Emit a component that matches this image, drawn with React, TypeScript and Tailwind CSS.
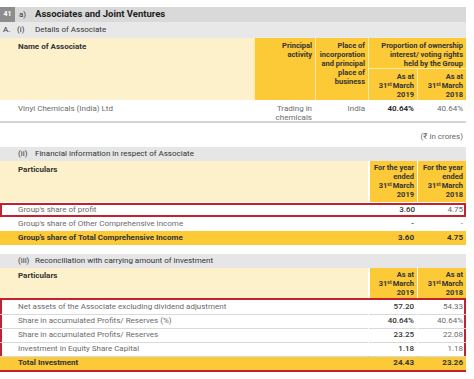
import React from "react";

const cream = "bg-[#fdf1cc]";
const yellow = "bg-[#fcc937]";

function Sup({ children }: { children: React.ReactNode }) {
  return <span className="inline-block text-[5px] leading-[5px] align-top mt-[1px] mr-[1px]">{children}</span>;
}

function SectionBar({ num, label }: { num: string; label: string }) {
  return (
    <div className="h-[14px] bg-[#e6e6e6] flex items-center text-[8px] text-[#333]">
      <span className="w-[35px] pl-[18px] shrink-0">{num}</span>
      <span>{label}</span>
    </div>
  );
}

function DataRow({
  label,
  a,
  b,
  total,
  divider = true,
}: {
  label: string;
  a: string;
  b: string;
  total?: boolean;
  divider?: boolean;
}) {
  const line = divider && !total ? "border-b border-[#d9d9d9]" : "";
  return (
    <div
      className={`grid grid-cols-[368px_1fr_1fr] h-[14px] text-[8px] leading-[14px] ${
        total ? `${yellow} font-bold text-[#333]` : "text-[#6b6b6b]"
      }`}
    >
      <div className={`pl-[18px] ${line}`}>{label}</div>
      <div className={`text-right pr-[3px] ml-px ${total ? "" : "font-medium text-[#333]"} ${line}`}>{a}</div>
      <div className={`text-right pr-[3px] ml-px ${line}`}>{b}</div>
    </div>
  );
}

export default function App() {
  return (
    <div className="w-[474px] h-[379px] bg-white pt-[7px] font-['Roboto',sans-serif] overflow-hidden">
      <div className="w-[466px]">
        {/* Title */}
        <div className="h-[15px] bg-[#d9d9d9] flex items-center">
          <div className="w-[15px] h-full bg-[#8d8d8d] text-white text-[7px] font-bold flex items-center justify-center">
            41
          </div>
          <span className="w-[20px] pl-[4px] text-[8px] text-[#333]">a)</span>
          <span className="text-[9.5px] font-bold text-[#222]">Associates and Joint Ventures</span>
        </div>
        <div className="h-[16px] bg-[#e8e8e8] flex items-center text-[8px] text-[#333]">
          <span className="w-[17px] pl-[3px]">A.</span>
          <span className="w-[18px]">(i)</span>
          <span>Details of Associate</span>
        </div>

        {/* Section i header */}
        <div className="grid grid-cols-[254px_61px_53px_49px_49px] grid-rows-[30px_32px] text-[7.5px] leading-[9px] font-bold text-[#333]">
          <div className={`row-span-2 ${cream} pl-[18px] pt-[4px] text-[8px]`}>Name of Associate</div>
          <div className={`row-span-2 ${yellow} text-right pr-[3px] pt-[3px] border-l border-[#fde9a8]`}>
            Principal
            <br />
            activity
          </div>
          <div className={`row-span-2 ${yellow} text-right pr-[3px] pt-[3px] border-l border-[#fde9a8]`}>
            Place of
            <br />
            incorporation
            <br />
            and principal
            <br />
            place of
            <br />
            business
          </div>
          <div className={`col-span-2 ${yellow} text-right pr-[3px] pt-[3px] border-l border-[#fde9a8]`}>
            Proportion of ownership
            <br />
            interest/ voting rights
            <br />
            held by the Group
          </div>
          <div className={`${yellow} text-right pr-[3px] pt-[3px] border-l border-t border-[#fde9a8]`}>
            As at
            <br />
            31<Sup>st</Sup>March
            <br />
            2019
          </div>
          <div className={`${yellow} text-right pr-[3px] pt-[3px] border-l border-t border-[#fde9a8]`}>
            As at
            <br />
            31<Sup>st</Sup>March
            <br />
            2018
          </div>
        </div>
        <div className="grid grid-cols-[254px_61px_53px_49px_49px] h-[23px] text-[8px] leading-[9px] text-[#6b6b6b] border-b-2 border-[#d4d4d4]">
          <div className="pl-[18px] pt-[4px]">Vinyl Chemicals (India) Ltd</div>
          <div className="text-right pr-[3px] pt-[4px]">
            Trading in
            <br />
            chemicals
          </div>
          <div className="text-right pr-[3px] pt-[4px]">India</div>
          <div className="text-right pr-[3px] pt-[4px] font-bold text-[#333]">40.64%</div>
          <div className="text-right pr-[3px] pt-[4px]">40.64%</div>
        </div>

        <div className="h-[24px] flex items-center justify-end pr-[3px] pt-[4px] text-[8px] text-[#666]">(₹ in crores)</div>

        {/* Section ii */}
        <SectionBar num="(ii)" label="Financial information in respect of Associate" />
        <div className="grid grid-cols-[368px_1fr_1fr] h-[41px] text-[7.5px] leading-[9px] font-bold text-[#333]">
          <div className={`${cream} pl-[18px] pt-[4px] text-[8px]`}>Particulars</div>
          <div className={`${yellow} ml-[2px] text-right pr-[3px] pt-[2px]`}>
            For the year
            <br />
            ended
            <br />
            31<Sup>st</Sup>March
            <br />
            2019
          </div>
          <div className={`${yellow} ml-px text-right pr-[3px] pt-[2px]`}>
            For the year
            <br />
            ended
            <br />
            31<Sup>st</Sup>March
            <br />
            2018
          </div>
        </div>
        <div className="border-2 border-[#c4212f] mt-px">
          <div className="grid grid-cols-[366px_1fr_1fr] h-[10px] text-[8px] leading-[10px] text-[#6b6b6b]">
            <div className="pl-[16px]">Group's share of profit</div>
            <div className="text-right pr-[1px] font-medium text-[#333]">3.60</div>
            <div className="text-right pr-[1px]">4.75</div>
          </div>
        </div>
        <DataRow label="Group's share of Other Comprehensive Income" a="-" b="-" divider={false} />
        <DataRow label="Group's share of Total Comprehensive Income" a="3.60" b="4.75" total />

        <div className="h-[9px]" />

        {/* Section iii */}
        <SectionBar num="(iii)" label="Reconciliation with carrying amount of investment" />
        <div className="grid grid-cols-[368px_1fr_1fr] h-[30px] text-[7.5px] leading-[9px] font-bold text-[#333]">
          <div className={`${cream} pl-[18px] pt-[3px] text-[8px]`}>Particulars</div>
          <div className={`${yellow} ml-[2px] text-right pr-[3px] pt-[2px]`}>
            As at
            <br />
            31<Sup>st</Sup>March
            <br />
            2019
          </div>
          <div className={`${yellow} ml-px text-right pr-[3px] pt-[2px]`}>
            As at
            <br />
            31<Sup>st</Sup>March
            <br />
            2018
          </div>
        </div>
        <div className="border-2 border-[#c4212f]">
          <div className="-mx-[2px]">
            <DataRow label="Net assets of the Associate excluding dividend adjustment" a="57.20" b="54.33" />
            <DataRow label="Share in accumulated Profits/ Reserves (%)" a="40.64%" b="40.64%" />
            <DataRow label="Share in accumulated Profits/ Reserves" a="23.25" b="22.08" />
            <DataRow label="Investment in Equity Share Capital" a="1.18" b="1.18" />
            <DataRow label="Total Investment" a="24.43" b="23.26" total />
          </div>
        </div>
      </div>
    </div>
  );
}
